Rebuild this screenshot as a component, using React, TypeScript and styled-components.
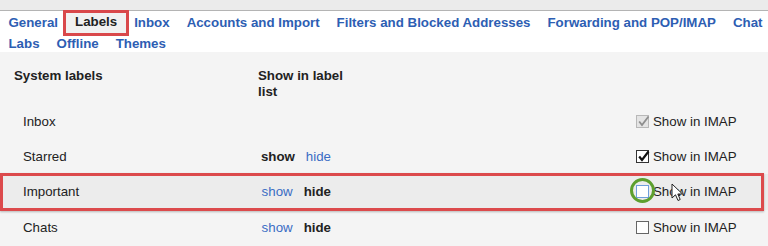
import React from "react";
import styled, { createGlobalStyle, css } from "styled-components";

const Global = createGlobalStyle`
  html, body { margin: 0; padding: 0; }
  body {
    width: 768px;
    height: 246px;
    overflow: hidden;
    background: #f4f4f4;
    font-family: "Liberation Sans", Arial, sans-serif;
    font-size: 13.3px;
    color: #222;
  }
  * { box-sizing: border-box; }
`;

const Page = styled.div`
  width: 768px;
  height: 246px;
  display: flex;
  flex-direction: column;
  overflow: hidden;
`;

const TopStrip = styled.div`
  height: 11px;
  background: #ebebeb;
  border-bottom: 1px solid #b4b4b4;
`;

const TabBar = styled.nav`
  background: #fff;
  height: 41px;
  display: flex;
  flex-direction: column;
`;

const TabRow = styled.div<{ $h: number }>`
  display: flex;
  height: ${(p) => p.$h}px;
  align-items: stretch;
`;

const Tab = styled.span<{ $selected?: boolean }>`
  position: relative;
  padding: 0 8.5px;
  font-weight: bold;
  line-height: 16px;
  color: ${(p) => (p.$selected ? "#222" : "#2d5eb3")};
  white-space: nowrap;
  display: flex;
  align-items: center;
  ${(p) =>
    p.$selected &&
    css`
      &::before {
        content: "";
        position: absolute;
        left: -3.5px;
        right: -3px;
        top: -1px;
        bottom: -1px;
        background: #f1f1f1;
        border: 3px solid #d9484b;
        z-index: 0;
      }
    `}
  & > span {
    position: relative;
    z-index: 1;
    margin-top: ${(p) => (p.$selected ? "-3px" : "0")};
  }
`;

const Content = styled.div`
  background: #f4f4f4;
  flex: 1;
`;

const Grid = css`
  display: grid;
  grid-template-columns: 258px 378px 1fr;
`;

const HeaderRow = styled.div`
  ${Grid};
  padding: 16px 0 4px;
  font-weight: bold;
  line-height: 16px;
`;

const HeaderLabel = styled.div`
  padding-left: 14px;
`;

const HeaderShow = styled.div`
  width: 100px;
`;

const Row = styled.div<{ $highlight?: boolean }>`
  ${Grid};
  position: relative;
  height: 35.2px;
  align-items: center;
  background: ${(p) => (p.$highlight ? "#ececec" : "transparent")};
  ${(p) =>
    p.$highlight &&
    css`
      &::after {
        content: "";
        position: absolute;
        left: 0;
        right: 4px;
        top: -1.5px;
        bottom: -1.5px;
        border: 3px solid #dc4a4c;
        box-shadow: 0 1px 2px rgba(0, 0, 0, 0.25);
        pointer-events: none;
      }
    `}
`;

const LabelCell = styled.div`
  padding-left: 23px;
`;

const ShowHide = styled.div`
  width: 73px;
  display: flex;
  justify-content: flex-end;
  gap: 11px;
`;

const Toggle = styled.span<{ $active?: boolean }>`
  font-weight: ${(p) => (p.$active ? "bold" : "normal")};
  color: ${(p) => (p.$active ? "#222" : "#3a6cc4")};
`;

const ImapCell = styled.label`
  position: relative;
  display: flex;
  align-items: center;
  gap: 4px;
`;

type BoxState = "disabled" | "checked" | "hover" | "empty";

const Box = styled.span<{ $state: BoxState }>`
  position: relative;
  width: 13px;
  height: 13px;
  flex: none;
  background: ${(p) => (p.$state === "disabled" ? "#e4e4e4" : "#fff")};
  border: 1px solid
    ${(p) =>
      p.$state === "disabled"
        ? "#b8b8b8"
        : p.$state === "hover"
        ? "#6f9fdb"
        : p.$state === "checked"
        ? "#333"
        : "#666"};
  & > svg {
    position: absolute;
    left: 0;
    top: -2px;
  }
`;

const ImapText = styled.span`
  color: #222;
`;

const Ring = styled.span`
  position: absolute;
  left: -6px;
  top: 50%;
  width: 25px;
  height: 25px;
  margin-top: -14px;
  border: 3px solid #5d9f2e;
  border-radius: 50%;
  pointer-events: none;
`;

const Cursor = styled.svg`
  position: absolute;
  left: 35px;
  top: -1px;
  pointer-events: none;
`;

function Checkbox({ state }: { state: BoxState }) {
  const checked = state === "disabled" || state === "checked";
  return (
    <Box $state={state}>
      {checked && (
        <svg width="13" height="14" viewBox="0 0 13 14">
          <path
            d="M2.2 7.5 L5 11 L11.5 2.5"
            fill="none"
            stroke={state === "disabled" ? "#8e8e8e" : "#111"}
            strokeWidth={state === "disabled" ? 1.8 : 2.2}
          />
        </svg>
      )}
    </Box>
  );
}

const tabs1 = [
  "General",
  "Labels",
  "Inbox",
  "Accounts and Import",
  "Filters and Blocked Addresses",
  "Forwarding and POP/IMAP",
  "Chat",
];
const tabs2 = ["Labs", "Offline", "Themes"];

type RowData = {
  name: string;
  toggle: "none" | "show" | "hide";
  box: BoxState;
  highlight?: boolean;
};

const rows: RowData[] = [
  { name: "Inbox", toggle: "none", box: "disabled" },
  { name: "Starred", toggle: "show", box: "checked" },
  { name: "Important", toggle: "hide", box: "hover", highlight: true },
  { name: "Chats", toggle: "hide", box: "empty" },
];

export default function App() {
  return (
    <Page>
      <Global />
      <TopStrip />
      <TabBar>
        <TabRow $h={24}>
          {tabs1.map((t) => (
            <Tab key={t} $selected={t === "Labels"}>
              <span>{t}</span>
            </Tab>
          ))}
        </TabRow>
        <TabRow $h={17}>
          {tabs2.map((t) => (
            <Tab key={t}>
              <span>{t}</span>
            </Tab>
          ))}
        </TabRow>
      </TabBar>
      <Content>
        <HeaderRow>
          <HeaderLabel>System labels</HeaderLabel>
          <HeaderShow>Show in label list</HeaderShow>
          <div />
        </HeaderRow>
        {rows.map((r) => (
          <Row key={r.name} $highlight={r.highlight}>
            <LabelCell>{r.name}</LabelCell>
            <div>
              {r.toggle !== "none" && (
                <ShowHide>
                  <Toggle $active={r.toggle === "show"}>show</Toggle>
                  <Toggle $active={r.toggle === "hide"}>hide</Toggle>
                </ShowHide>
              )}
            </div>
            <ImapCell>
              <Checkbox state={r.box} />
              <ImapText>Show in IMAP</ImapText>
              {r.highlight && (
                <>
                  <Ring />
                  <Cursor width="13" height="19" viewBox="0 0 13 19">
                    <path
                      d="M1 1 L1 15 L4.5 11.8 L7 17.5 L9.2 16.5 L6.8 11 L11.5 11 Z"
                      fill="#fff"
                      stroke="#222"
                      strokeWidth="1"
                      strokeLinejoin="round"
                    />
                  </Cursor>
                </>
              )}
            </ImapCell>
          </Row>
        ))}
      </Content>
    </Page>
  );
}
